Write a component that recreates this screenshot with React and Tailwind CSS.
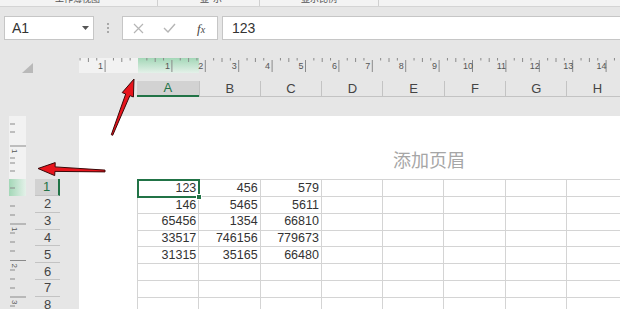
import React from "react"

const COLS = ["A", "B", "C", "D", "E", "F", "G", "H"]
const DATA = [
  [123, 456, 579],
  [146, 5465, 5611],
  [65456, 1354, 66810],
  [33517, 746156, 779673],
  [31315, 35165, 66480],
]
const ROWS = [1, 2, 3, 4, 5, 6, 7, 8]
const FONT = "font-['Liberation_Sans','Noto_Sans_CJK_SC',sans-serif]"

function arrowPts(tx, ty, hx, hy, headLen, headW, w0, w1) {
  const dx = hx - tx, dy = hy - ty, L = Math.hypot(dx, dy)
  const ux = dx / L, uy = dy / L, nx = -uy, ny = ux
  const bx = hx - ux * headLen, by = hy - uy * headLen
  const p = [
    [tx + nx * w0 / 2, ty + ny * w0 / 2],
    [bx + nx * w1 / 2, by + ny * w1 / 2],
    [bx + nx * headW / 2, by + ny * headW / 2],
    [hx, hy],
    [bx - nx * headW / 2, by - ny * headW / 2],
    [bx - nx * w1 / 2, by - ny * w1 / 2],
    [tx - nx * w0 / 2, ty - ny * w0 / 2],
  ]
  return p.map(q => q.map(v => v.toFixed(1)).join(",")).join(" ")
}

function HRuler() {
  const x0 = 59.5, u = 33.4
  const ticks = []
  for (let n = -2; n <= 15; n++) {
    const mx = x0 + n * u
    if (n !== 0) {
      ticks.push(<line key={"m" + n} x1={mx} y1={2} x2={mx} y2={14} stroke="#8a8a8a" strokeWidth={1} />)
      ticks.push(
        <text key={"t" + n} x={mx - 4.5} y={11} fontSize={9} fill="#555" textAnchor="middle"
          fontFamily="Liberation Sans, sans-serif">{Math.abs(n)}</text>
      )
    }
    for (let k = 1; k <= 3; k++) {
      const tx = mx + (k * u) / 4
      ticks.push(<line key={`q${n}-${k}`} x1={tx} y1={0} x2={tx} y2={k === 2 ? 4 : 2.5} stroke="#8a8a8a" strokeWidth={1} />)
    }
  }
  return (
    <svg width={541} height={15} className="block">
      <defs>
        <linearGradient id="hg" x1="0" y1="0" x2="0" y2="1">
          <stop offset="0%" stopColor="#a3d7b7" />
          <stop offset="100%" stopColor="#e4f1e9" />
        </linearGradient>
      </defs>
      <rect x={0} y={0} width={59} height={15} fill="#f2f2f2" />
      <rect x={59} y={0} width={61} height={15} fill="url(#hg)" />
      {ticks}
    </svg>
  )
}

function VRuler() {
  const items = []
  const majors = [30, 108, 144.5, 181]
  majors.forEach((m, i) => {
    items.push(<line key={"m" + i} x1={1} y1={m} x2={17} y2={m} stroke="#8a8a8a" strokeWidth={1} />)
    const lbl = i === 0 ? 1 : i
    items.push(
      <text key={"t" + i} x={3} y={m + 3} fontSize={8} fill="#555"
        transform={`rotate(90 ${3} ${m + 3})`} fontFamily="Liberation Sans, sans-serif">{lbl}</text>
    )
  })
  const ticks = [8, 16, 42, 47, 55, 72, 90, 99, 117, 126, 135, 154, 163, 172, 190]
  ticks.forEach((t, i) => items.push(
    <line key={"k" + i} x1={1} y1={t} x2={6} y2={t} stroke="#8a8a8a" strokeWidth={1} />
  ))
  return (
    <svg width={17} height={193} className="block">
      <defs>
        <linearGradient id="vg" x1="0" y1="0" x2="1" y2="0">
          <stop offset="0%" stopColor="#a3d7b7" />
          <stop offset="100%" stopColor="#e4f1e9" />
        </linearGradient>
      </defs>
      <rect x={0} y={0} width={17} height={63} fill="#f2f2f2" />
      <rect x={0} y={63} width={17} height={17} fill="url(#vg)" />
      {items}
    </svg>
  )
}

export default function App() {
  return (
    <div className={`relative w-[620px] h-[309px] overflow-hidden bg-[#e6e6e6] ${FONT}`}>
      {/* ribbon group labels, cut off */}
      <div className="relative h-[7px] bg-[#f3f3f3] border-b border-[#d4d4d4] overflow-hidden">
        <div className="flex -mt-[5px] text-[9px] leading-[9px] text-[#555]">
          <span className="ml-[55px] w-[102px]">工作簿视图</span>
          <span className="w-px h-[12px] bg-[#d0d0d0]" />
          <span className="ml-[42px] w-[59px] tracking-[4px]">显示</span>
          <span className="w-px h-[12px] bg-[#d0d0d0]" />
          <span className="ml-[41px] w-[77px]">显示比例</span>
          <span className="w-px h-[12px] bg-[#d0d0d0]" />
        </div>
      </div>

      {/* formula bar */}
      <div className="flex items-center mt-[9px] h-[24px]">
        <div className="ml-[4px] w-[90px] h-full bg-white border border-[#c6c6c6] flex items-center pl-[7px] pr-[4px]">
          <span className="text-[14px] text-[#333] flex-1">A1</span>
          <svg width="7" height="4"><path d="M0 0 L7 0 L3.5 4 Z" fill="#555" /></svg>
        </div>
        <div className="ml-[13px] flex flex-col gap-[2px]">
          <span className="w-[2px] h-[2px] bg-[#a8a8a8]" />
          <span className="w-[2px] h-[2px] bg-[#a8a8a8]" />
          <span className="w-[2px] h-[2px] bg-[#a8a8a8]" />
        </div>
        <div className="ml-[13px] w-[96px] h-full bg-white border border-[#c6c6c6] flex items-center">
          <svg width="11" height="11" className="ml-[10px]">
            <path d="M1 1 L10 10 M10 1 L1 10" stroke="#b5b5b5" strokeWidth="1.2" />
          </svg>
          <svg width="13" height="10" className="ml-[19px]">
            <path d="M1 5 L5 9 L12 1" stroke="#b5b5b5" strokeWidth="1.4" fill="none" />
          </svg>
          <span className="ml-[21px] font-['Liberation_Serif',serif] italic text-[13px] text-[#444] leading-none">
            f<span className="text-[10px]">x</span>
          </span>
        </div>
        <div className="ml-[4px] flex-1 h-full bg-white border border-[#c6c6c6] border-r-0 flex items-center pl-[9px]">
          <span className="text-[14px] text-[#333]">123</span>
        </div>
      </div>

      {/* ruler row */}
      <div className="flex mt-[18px] h-[15px]">
        <div className="w-[79px] relative">
          <svg width="11" height="10" className="absolute left-[22px] top-[5px]">
            <path d="M11 0 L11 10 L0 10 Z" fill="#b9b9b9" />
          </svg>
        </div>
        <HRuler />
      </div>

      {/* column headers */}
      <div className="flex mt-[8px] h-[16px] pl-[137.3px]">
        {COLS.map((c, i) => (
          <div key={c}
            className={`w-[61.3px] shrink-0 h-full flex items-center justify-center text-[13px] ${
              i === 0
                ? "bg-[#d2d2d2] text-[#217346] border-b-2 border-[#217346]"
                : "text-[#444] border-b border-l border-[#c3c3c3]"
            }`}>
            {c}
          </div>
        ))}
      </div>

      {/* body */}
      <div className="flex items-start">
        <div className="ml-[9px] mt-[19px]"><VRuler /></div>
        <div className="ml-[9px] mt-[82px] w-[25px] flex flex-col">
          {ROWS.map(r => (
            <div key={r}
              className={`h-[16.85px] shrink-0 flex items-center justify-center text-[13px] leading-none border-b border-[#c3c3c3] ${
                r === 1 ? "bg-[#d2d2d2] text-[#217346] border-r-2 border-r-[#217346]" : "text-[#444]"
              }`}>
              {r}
            </div>
          ))}
        </div>
        <div className="ml-[19px] mt-[19px] flex-1 bg-white h-[300px] overflow-hidden">
          <div className="h-[63px] pt-[35px] pl-[314px] text-[18px] leading-[20px] text-[#a6a6a6]">添加页眉</div>
          <div className="relative ml-[58px] border-t border-l border-[#d4d4d4] w-max">
            {ROWS.map(r => (
              <div key={r} className="flex h-[16.85px]">
                {COLS.map((c, ci) => (
                  <div key={c}
                    className="w-[61.3px] shrink-0 h-full border-r border-b border-[#d4d4d4] flex items-center justify-end pr-[2px] text-[12.5px] text-[#333] leading-none">
                    {r <= 5 && ci < 3 ? DATA[r - 1][ci] : ""}
                  </div>
                ))}
              </div>
            ))}
            <div className="absolute left-[-1px] top-[-1px] w-[63px] h-[19px] border-2 border-[#217346]">
              <div className="absolute right-[-4px] bottom-[-4px] w-[6px] h-[6px] bg-[#217346] border border-white" />
            </div>
          </div>
        </div>
      </div>

      {/* red arrows */}
      <svg width="620" height="309" className="absolute inset-0 pointer-events-none">
        <polygon points={arrowPts(112, 135, 134, 79, 17, 12, 1.5, 4.5)}
          fill="#e8141c" stroke="#3a0808" strokeWidth="1" strokeLinejoin="miter" />
        <polygon points={arrowPts(105, 171, 38, 168.5, 17, 13, 1.8, 4.5)}
          fill="#e8141c" stroke="#3a0808" strokeWidth="1" strokeLinejoin="miter" />
      </svg>
    </div>
  )
}
